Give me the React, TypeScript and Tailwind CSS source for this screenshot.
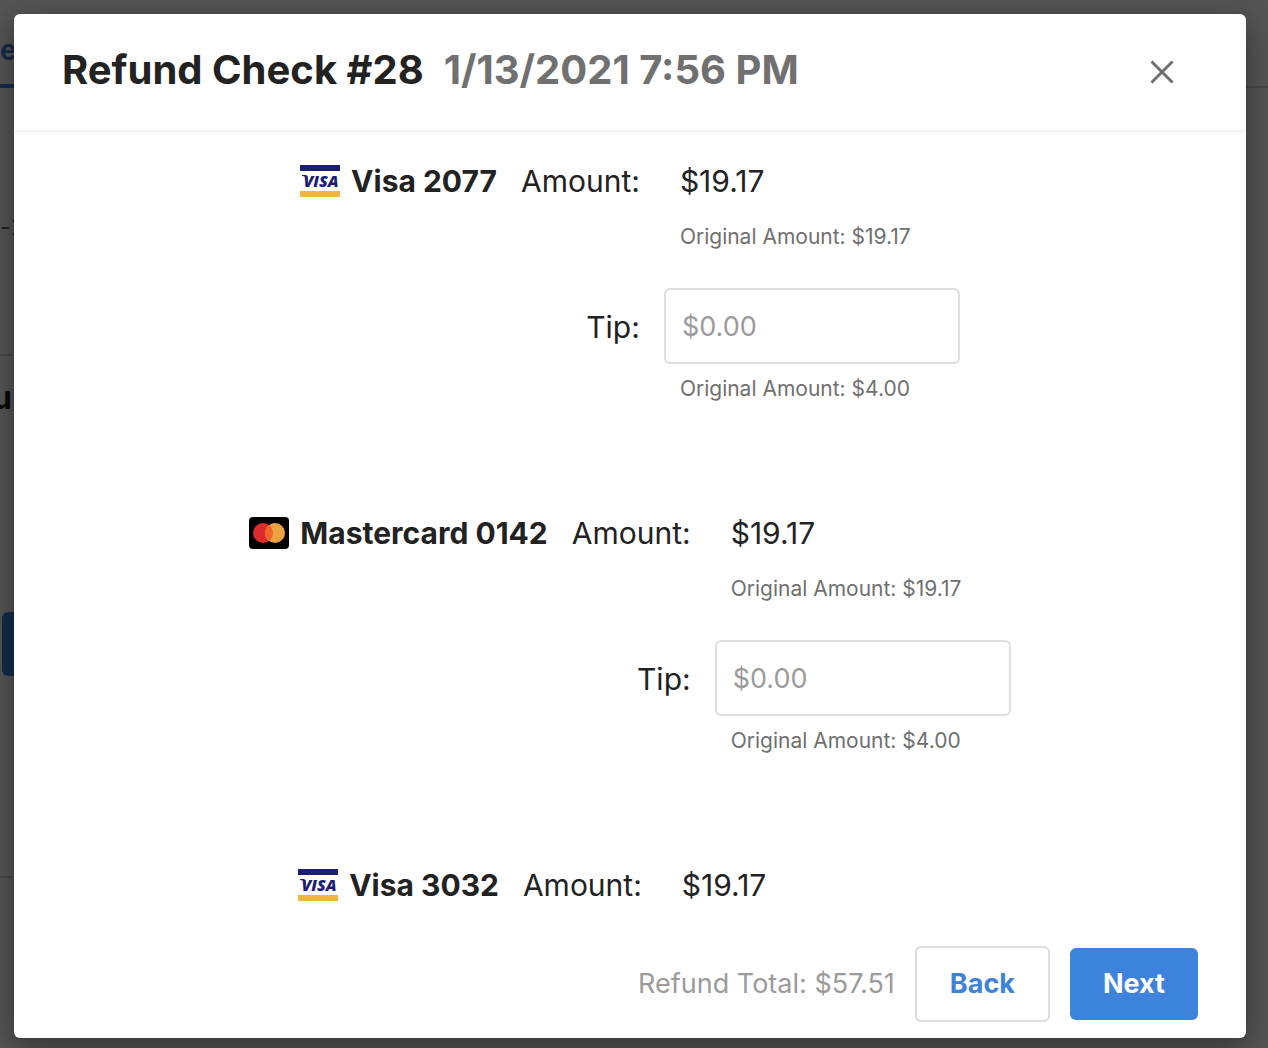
import React, { useState } from 'react'

interface iPayment {
	id: string;
	brand: 'visa' | 'mastercard';
	label: string;
	amount: string;
	originalAmount?: string;
	originalTip?: string;
}

const payments: iPayment[] = [
	{ id: 'p1', brand: 'visa', label: 'Visa 2077', amount: '$19.17', originalAmount: '$19.17', originalTip: '$4.00' },
	{ id: 'p2', brand: 'mastercard', label: 'Mastercard 0142', amount: '$19.17', originalAmount: '$19.17', originalTip: '$4.00' },
	{ id: 'p3', brand: 'visa', label: 'Visa 3032', amount: '$19.17' },
]

const VisaLogo = () => (
	<svg width="40" height="32" viewBox="0 0 40 32" role="img" aria-label="Visa card">
		<rect width="40" height="32" fill="#fff" />
		<rect width="40" height="6" fill="#1a1f71" />
		<rect y="26" width="40" height="6" fill="#efb640" />
		<path d="M2 10H6.500L8.500 16C7.500 13 5.500 11.500 2 10.800Z" fill="#1a1f71" />
		<text x="21" y="22" textAnchor="middle" fontFamily="Open Sans, sans-serif" fontSize="16" fontWeight="800" fontStyle="italic" fill="#1a1f71">VISA</text>
	</svg>
)

const MastercardLogo = () => (
	<svg width="40" height="32" viewBox="0 0 40 32" role="img" aria-label="Mastercard card">
		<rect width="40" height="32" rx="4" fill="#000" />
		<circle cx="14" cy="16" r="10" fill="#dc2b2b" />
		<circle cx="26" cy="16" r="10" fill="#eba341" />
		<path d="M20 8a10 10 0 0 1 0 16a10 10 0 0 1 0-16Z" fill="#f26529" />
	</svg>
)

const Payment = ({ payment }: { payment: iPayment }) => {
	const [ tip, setTip ] = useState('');

	return (
		<section className="flex justify-center gap-6 pb-[110px]">
			<h2 className="flex h-10 items-center gap-[11px] text-[30px] font-bold">
				{payment.brand === 'visa' ? <VisaLogo /> : <MastercardLogo />}
				{payment.label}
			</h2>
			<div className="grid grid-cols-[auto_296px] gap-x-6 gap-y-[37px]">
				<span className="text-right text-[30px] leading-10">Amount:</span>
				<div className="px-4">
					<p className="text-[30px] leading-10">{payment.amount}</p>
					{payment.originalAmount ? (
						<p className="mt-[22px] text-[21px] leading-7 text-[#707070]">Original Amount: {payment.originalAmount}</p>
					) : null}
				</div>
				{payment.originalTip ? (
					<>
						<label htmlFor={payment.id} className="text-right text-[30px] leading-[78px]">Tip:</label>
						<div>
							<input
								id={payment.id}
								type="text"
								placeholder="$0.00"
								value={tip}
								onChange={(e) => setTip(e.target.value)}
								className="block h-[76px] w-full rounded-md border-2 border-[#dfdfdf] px-4 text-[27px] placeholder:text-[#9b9b9b]"
							/>
							<p className="mt-[11px] px-4 text-[21px] leading-7 text-[#707070]">Original Amount: {payment.originalTip}</p>
						</div>
					</>
				) : null}
			</div>
		</section>
	)
}

// Page behind the dialog, only its edges stay visible
const Backdrop = () => (
	<div aria-hidden="true" className="absolute inset-0 overflow-hidden bg-white text-[28px]">
		<div className="h-22 border-b-2 border-[#d4d4d4]">
			<div className="flex h-22 w-32 items-center border-b-4 border-[#3d83dc] pt-4 font-bold text-[#3d83dc]">e</div>
		</div>
		<div className="flex h-[268px] w-32 items-center border-b-2 border-[#d4d4d4] pt-3 text-2xl text-[#666]">
			<span>-</span>
			<span>2</span>
		</div>
		<div className="h-[522px] w-32 border-b-2 border-[#d4d4d4] pt-5">
			<div className="-ml-2 text-[32px] leading-11 font-bold text-[#222]">u</div>
			<div className="mt-48 ml-0.5 h-16 rounded-md bg-[#3d83dc]" />
		</div>
	</div>
)

const App = () => {
	return (
		<div className="relative h-screen font-['Inter',sans-serif] text-[#222]">
			<Backdrop />
			<div className="absolute inset-0 flex bg-black/67 pt-3.5 pr-[22px] pb-2.5 pl-3.5">
				<div role="dialog" aria-labelledby="title" className="flex min-w-0 flex-1 flex-col overflow-hidden rounded-md bg-white shadow-[0_8px_28px_rgba(0,0,0,0.4)]">
					<header className="z-10 flex h-29 shrink-0 items-center justify-between px-12 shadow-[0_2px_4px_rgba(0,0,0,0.07)]">
						<h1 id="title" className="flex gap-5 pb-1 text-[40px] leading-12 font-bold">
							Refund Check #28
							<span className="text-[#707070]">1/13/2021 7:56 PM</span>
						</h1>
						<button type="button" aria-label="Close" className="mr-3 p-3">
							<svg width="24" height="24" viewBox="0 0 24 24" fill="none" stroke="#707070" strokeWidth="3">
								<path d="M1.500 1.500L22.500 22.500M22.500 1.500L1.500 22.500" />
							</svg>
						</button>
					</header>
					<main className="min-h-0 flex-1 overflow-y-auto pt-[31px] [scrollbar-width:none]">
						{
							payments.map((payment) => <Payment key={payment.id} payment={payment} />)
						}
					</main>
					<footer className="flex shrink-0 items-center justify-end gap-5 px-12 py-4 text-[27px]">
						<span className="text-[#9b9b9b]">Refund Total: $57.51</span>
						<button type="button" className="h-[76px] rounded-md border-2 border-[#dcdce2] px-[33px] font-bold text-[#3d83dc]">Back</button>
						<button type="button" className="h-18 rounded-md bg-[#3d83dc] px-[33px] font-bold text-white">Next</button>
					</footer>
				</div>
			</div>
		</div>
	)
}

export default App
